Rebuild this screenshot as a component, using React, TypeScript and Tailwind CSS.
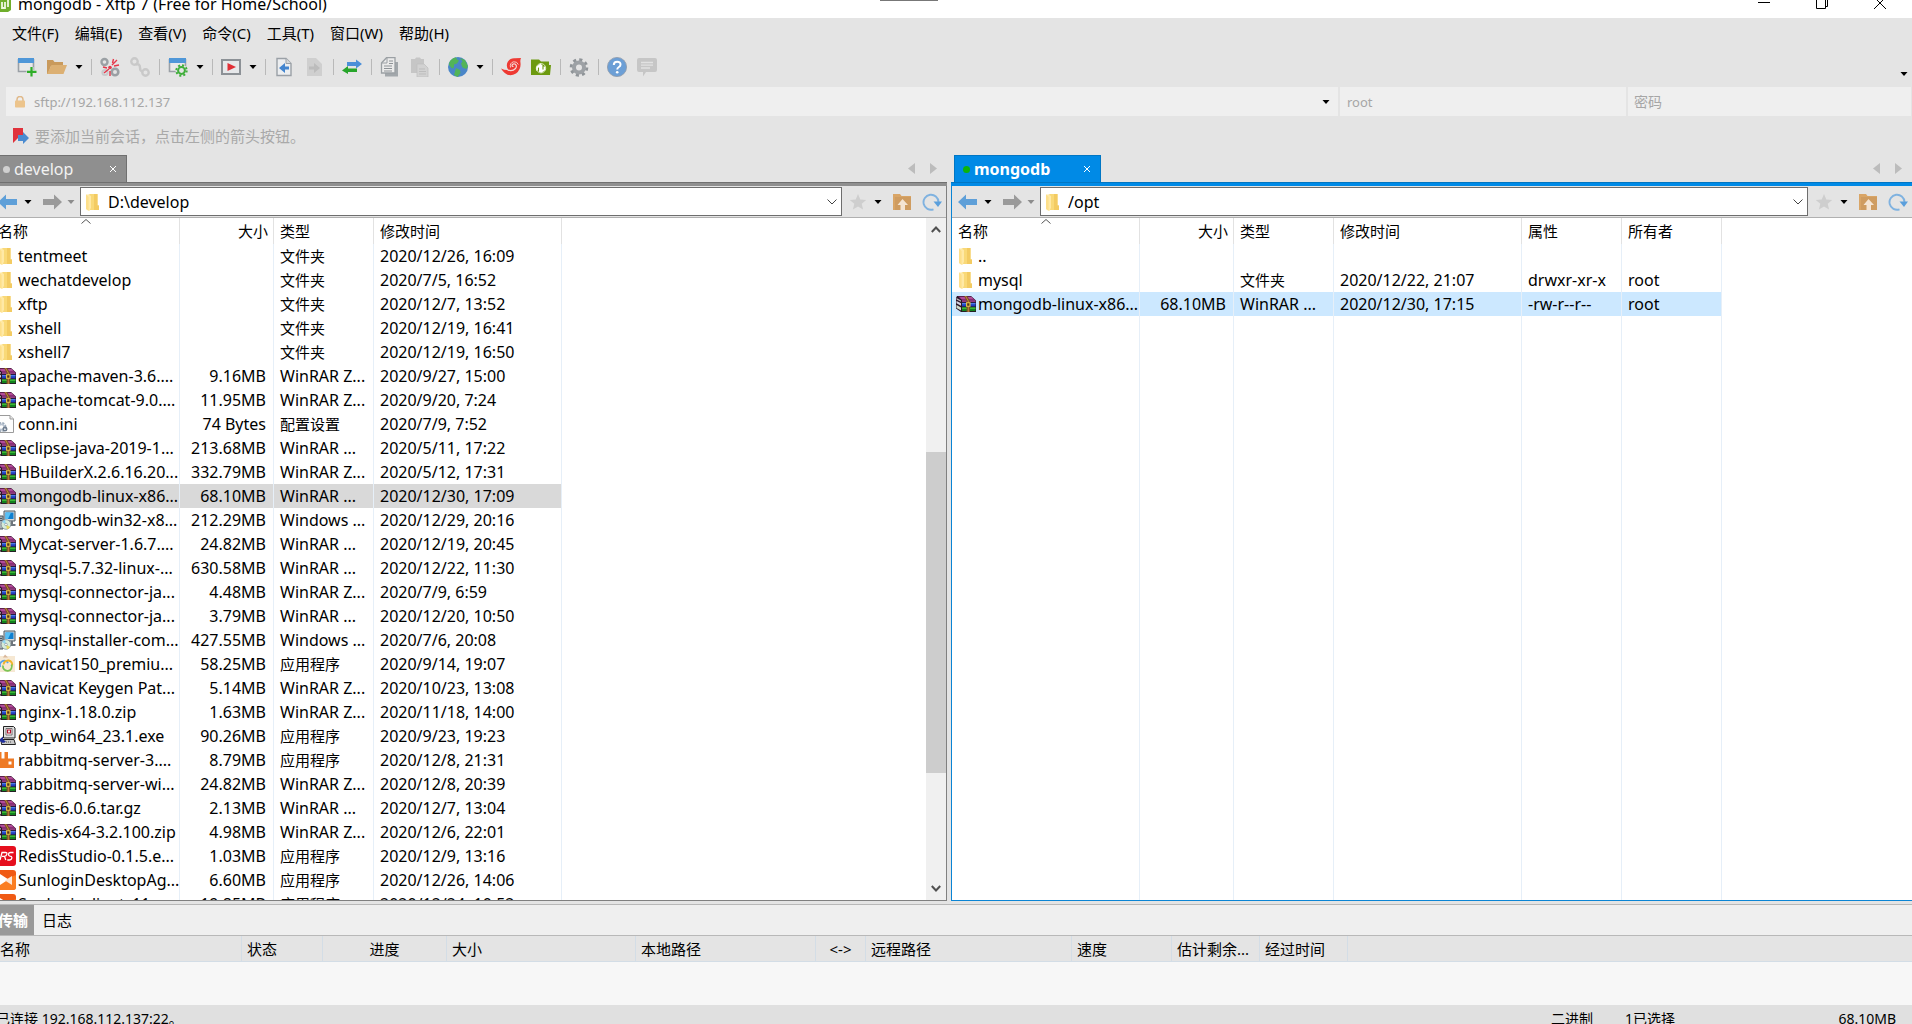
/**
 * App.tsx
 *
 * Two-pane SFTP client window: menu, toolbar, session bar, local / remote
 * file panes, transfer queue and status bar.
 */

import React from 'react';

// ─── Types ────────────────────────────────────────────────────────────────────

type FileKind = 'folder' | 'rar' | 'ini' | 'msi' | 'navicat' | 'otp' | 'rabbit' | 'redis' | 'sunlogin';

interface FileRow {
  kind: FileKind;
  name: string;
  size: string;
  type: string;
  modified: string;
  attrs?: string;
  owner?: string;
  selected?: boolean;
}

// ─── Data ─────────────────────────────────────────────────────────────────────

const LOCAL_FILES: FileRow[] = [
  { kind: 'folder', name: 'tentmeet', size: '', type: '文件夹', modified: '2020/12/26, 16:09' },
  { kind: 'folder', name: 'wechatdevelop', size: '', type: '文件夹', modified: '2020/7/5, 16:52' },
  { kind: 'folder', name: 'xftp', size: '', type: '文件夹', modified: '2020/12/7, 13:52' },
  { kind: 'folder', name: 'xshell', size: '', type: '文件夹', modified: '2020/12/19, 16:41' },
  { kind: 'folder', name: 'xshell7', size: '', type: '文件夹', modified: '2020/12/19, 16:50' },
  { kind: 'rar', name: 'apache-maven-3.6....', size: '9.16MB', type: 'WinRAR Z...', modified: '2020/9/27, 15:00' },
  { kind: 'rar', name: 'apache-tomcat-9.0....', size: '11.95MB', type: 'WinRAR Z...', modified: '2020/9/20, 7:24' },
  { kind: 'ini', name: 'conn.ini', size: '74 Bytes', type: '配置设置', modified: '2020/7/9, 7:52' },
  { kind: 'rar', name: 'eclipse-java-2019-1...', size: '213.68MB', type: 'WinRAR ...', modified: '2020/5/11, 17:22' },
  { kind: 'rar', name: 'HBuilderX.2.6.16.20...', size: '332.79MB', type: 'WinRAR Z...', modified: '2020/5/12, 17:31' },
  { kind: 'rar', name: 'mongodb-linux-x86...', size: '68.10MB', type: 'WinRAR ...', modified: '2020/12/30, 17:09', selected: true },
  { kind: 'msi', name: 'mongodb-win32-x8...', size: '212.29MB', type: 'Windows ...', modified: '2020/12/29, 20:16' },
  { kind: 'rar', name: 'Mycat-server-1.6.7....', size: '24.82MB', type: 'WinRAR ...', modified: '2020/12/19, 20:45' },
  { kind: 'rar', name: 'mysql-5.7.32-linux-...', size: '630.58MB', type: 'WinRAR ...', modified: '2020/12/22, 11:30' },
  { kind: 'rar', name: 'mysql-connector-ja...', size: '4.48MB', type: 'WinRAR Z...', modified: '2020/7/9, 6:59' },
  { kind: 'rar', name: 'mysql-connector-ja...', size: '3.79MB', type: 'WinRAR ...', modified: '2020/12/20, 10:50' },
  { kind: 'msi', name: 'mysql-installer-com...', size: '427.55MB', type: 'Windows ...', modified: '2020/7/6, 20:08' },
  { kind: 'navicat', name: 'navicat150_premiu...', size: '58.25MB', type: '应用程序', modified: '2020/9/14, 19:07' },
  { kind: 'rar', name: 'Navicat Keygen Pat...', size: '5.14MB', type: 'WinRAR Z...', modified: '2020/10/23, 13:08' },
  { kind: 'rar', name: 'nginx-1.18.0.zip', size: '1.63MB', type: 'WinRAR Z...', modified: '2020/11/18, 14:00' },
  { kind: 'otp', name: 'otp_win64_23.1.exe', size: '90.26MB', type: '应用程序', modified: '2020/9/23, 19:23' },
  { kind: 'rabbit', name: 'rabbitmq-server-3....', size: '8.79MB', type: '应用程序', modified: '2020/12/8, 21:31' },
  { kind: 'rar', name: 'rabbitmq-server-wi...', size: '24.82MB', type: 'WinRAR Z...', modified: '2020/12/8, 20:39' },
  { kind: 'rar', name: 'redis-6.0.6.tar.gz', size: '2.13MB', type: 'WinRAR ...', modified: '2020/12/7, 13:04' },
  { kind: 'rar', name: 'Redis-x64-3.2.100.zip', size: '4.98MB', type: 'WinRAR Z...', modified: '2020/12/6, 22:01' },
  { kind: 'redis', name: 'RedisStudio-0.1.5.e...', size: '1.03MB', type: '应用程序', modified: '2020/12/9, 13:16' },
  { kind: 'sunlogin', name: 'SunloginDesktopAg...', size: '6.60MB', type: '应用程序', modified: '2020/12/26, 14:06' },
  { kind: 'sunlogin', name: 'Sunloginclient_11....', size: '19.85MB', type: '应用程序', modified: '2020/12/24, 10:52' },
];

const REMOTE_FILES: FileRow[] = [
  { kind: 'folder', name: '..', size: '', type: '', modified: '', attrs: '', owner: '' },
  { kind: 'folder', name: 'mysql', size: '', type: '文件夹', modified: '2020/12/22, 21:07', attrs: 'drwxr-xr-x', owner: 'root' },
  { kind: 'rar', name: 'mongodb-linux-x86...', size: '68.10MB', type: 'WinRAR ...', modified: '2020/12/30, 17:15', attrs: '-rw-r--r--', owner: 'root', selected: true },
];

const MENU = ['文件(F)', '编辑(E)', '查看(V)', '命令(C)', '工具(T)', '窗口(W)', '帮助(H)'];

const QUEUE_COLUMNS = [
  { label: '名称', cell: 'w-[242px] pl-0 text-left' },
  { label: '状态', cell: 'w-[81px] pl-[5px] text-left' },
  { label: '进度', cell: 'w-[124px] pl-0 text-center' },
  { label: '大小', cell: 'w-[189px] pl-[5px] text-left' },
  { label: '本地路径', cell: 'w-[180px] pl-[5px] text-left' },
  { label: '<->', cell: 'w-[50px] pl-0 text-center' },
  { label: '远程路径', cell: 'w-[206px] pl-[5px] text-left' },
  { label: '速度', cell: 'w-[100px] pl-[5px] text-left' },
  { label: '估计剩余...', cell: 'w-[88px] pl-[5px] text-left' },
  { label: '经过时间', cell: 'w-[88px] pl-[5px] text-left' },
];

// ─── File icons ───────────────────────────────────────────────────────────────

const FolderIcon: React.FC = () => (
  <svg viewBox="0 0 20 20" className="w-5 h-5 shrink-0">
    <path d="M7 2h7.500v11.500H16V18H5V3z" fill="#f9d978" />
    <path d="M11 2h3.500v11.500H16V18h-5z" fill="#f3cb62" />
    <path d="M3 2.500h2.500L8 4v11.500L6.500 19 3 17z" fill="#ffe9a6" />
    <path d="M3 2.500 5.600 5v14L3 17z" fill="#fddf8a" />
  </svg>
);

const RarIcon: React.FC = () => (
  <svg viewBox="0 0 20 20" className="w-5 h-5 shrink-0">
    <path d="M1 2h14l5 4.500V18H5l-5-3.500V4z" fill="#2a1626" />
    {/* purple volume */}
    <path d="M2 2.500h13l4 3.500H6z" fill="#8d2a78" />
    <path d="M4 3.500h12l1 1H5z" fill="#d56fb8" />
    <path d="M6 6.300h13.500v1.500H6z" fill="#b0459a" />
    <path d="M0.500 4 5 6.500v1.300L0.500 5.500z" fill="#c9b7c2" />
    {/* blue volume */}
    <path d="M6 8.800h13.500v3.600H6z" fill="#1c3fc0" />
    <path d="M6 9.200h13.500v1H6z" fill="#5d8cf0" />
    <path d="M0.500 7 5 9.300v2.500L0.500 9.300z" fill="#d5d2e0" />
    {/* green volume */}
    <path d="M6 13.300h13.500v3.800H6z" fill="#12821f" />
    <path d="M6 13.600h13.500v1.100H6z" fill="#4fd040" />
    <path d="M0.500 11 5 13.600v3L0.500 14z" fill="#d3dccb" />
    {/* belt */}
    <path d="M8 2h3l3 4.500V18h-3.400V7z" fill="#7a4f28" />
    <path d="M9.500 2 12.300 7v11" stroke="#c98d3c" strokeWidth="0.900" fill="none" />
    <path d="M10.600 8.700h3.400v3.600h-3.400z" fill="#5a3415" stroke="#e8c64a" strokeWidth="1.100" />
  </svg>
);

const IniIcon: React.FC = () => (
  <svg viewBox="0 0 20 20" className="w-5 h-5 shrink-0">
    <path d="M3.500 1.500h10.500l3.500 3.500v13.500h-14z" fill="#fdfdfd" stroke="#9b9b9b" />
    <path d="M14 1.500v3.500h3.500" fill="#e6e6e6" stroke="#9b9b9b" />
    <circle cx="5.500" cy="13" r="4" fill="none" stroke="#9aa8b8" strokeWidth="2" strokeDasharray="2 1.200" />
    <circle cx="5.500" cy="13" r="2.600" fill="none" stroke="#b8c3d0" strokeWidth="1.600" />
    <circle cx="9" cy="15" r="1.800" fill="none" stroke="#6f7d8e" strokeWidth="1.400" />
  </svg>
);

const MsiIcon: React.FC = () => (
  <svg viewBox="0 0 20 20" className="w-5 h-5 shrink-0">
    <path d="M8 1h11v10H8z" fill="#d4d8dc" stroke="#4b565f" />
    <path d="M9.500 2.500h8v6.500h-8z" fill="#0e7fd0" />
    <path d="M9.500 2.500h5.500l-3 6.500h-2.500z" fill="#56c0f5" />
    <path d="M15 11h2v3h2.500v2H14z" fill="#6d757c" />
    <path d="M2 6h5v13H2z" fill="#aab1b7" stroke="#4b565f" />
    <path d="M3 8.500h3M3 10.500h3" stroke="#4b565f" />
    <circle cx="10" cy="14.500" r="4.800" fill="#d6ecd8" stroke="#7b868f" strokeWidth="0.700" />
    <path d="M10 14.500 6 12a4.800 4.800 0 0 1 3-2.200z" fill="#8fd3f0" />
    <path d="M10 14.500l4 2.500a4.800 4.800 0 0 1-3 2.200z" fill="#e6d75a" />
    <circle cx="10" cy="14.500" r="1.300" fill="#fff" stroke="#7b868f" strokeWidth="0.600" />
  </svg>
);

const NavicatIcon: React.FC = () => (
  <svg viewBox="0 0 20 20" className="w-5 h-5 shrink-0">
    <rect x="1" y="2" width="18" height="16" fill="#f6e8d3" />
    <path d="M9 0.500 12 3.500 7 3.500z" fill="#d9b79b" />
    <path d="M4.500 13a4 4 0 1 1 7.500-4" fill="none" stroke="#5aa3e8" strokeWidth="1.800" />
    <path d="M7.500 10.500a4.500 4.500 0 0 1 8.500-1.500q.8 1.500-.5 2.500" fill="none" stroke="#f0b429" strokeWidth="1.800" />
    <path d="M15.500 10.500a4.500 4.500 0 1 1-8.500 1" fill="none" stroke="#7cc455" strokeWidth="1.800" />
  </svg>
);

const OtpIcon: React.FC = () => (
  <svg viewBox="0 0 20 20" className="w-5 h-5 shrink-0">
    <path d="M7.500 0.500h10l1.500 1.500v10h-11.500z" fill="#e0e0e0" stroke="#222" />
    <path d="M10 2.500h6v6.500h-6z" fill="#fff" stroke="#555" strokeWidth="0.800" />
    <path d="M11.500 4h3v3h-3z" fill="none" stroke="#b0122c" strokeWidth="1.200" />
    <path d="M5 13.500h13l1.500 5h-14z" fill="#c8c8c8" stroke="#222" />
    <path d="M8 16h8" stroke="#555" strokeDasharray="1 1" />
    <path d="M1.500 15 7 10.500v3l3 2-3 1.500-2.500-1.500z" fill="#1f2f9c" />
  </svg>
);

const RabbitIcon: React.FC = () => (
  <svg viewBox="0 0 20 20" className="w-5 h-5 shrink-0">
    <path d="M2 2h3.500v6.500H8.500V2H12v6.500h6V18H2z" fill="#ee7a25" />
    <rect x="12.500" y="11.500" width="3" height="3" fill="#fff" />
  </svg>
);

const RedisStudioIcon: React.FC = () => (
  <svg viewBox="0 0 20 20" className="w-5 h-5 shrink-0">
    <rect x="0" y="0" width="20" height="20" rx="3" fill="#e60f1e" />
    <path d="M4 14 6 6.500h3.500q1.800 0 1.300 1.800T8.500 10.300H6M8.500 10.300l1.300 3.700" fill="none" stroke="#fff" strokeWidth="1.300" />
    <path d="M17.500 6.500h-3q-1.800 0-2 1.700t1.300 1.900q2.400 0 2 2T13.500 14h-2.200" fill="none" stroke="#fff" strokeWidth="1.300" />
  </svg>
);

const SunloginIcon: React.FC = () => (
  <svg viewBox="0 0 20 20" className="w-5 h-5 shrink-0">
    <rect x="0" y="0" width="20" height="20" rx="3" fill="#f05a14" />
    <path d="M0 13 20 5v12a3 3 0 0 1-3 3H3a3 3 0 0 1-3-3z" fill="#fb7d22" />
    <path d="M4 4 12.500 9.500 4 15z" fill="#fff" />
    <path d="M16 6v9L9 10.500z" fill="#fde6d6" />
  </svg>
);

const FILE_ICONS: Record<FileKind, React.FC> = {
  folder: FolderIcon,
  rar: RarIcon,
  ini: IniIcon,
  msi: MsiIcon,
  navicat: NavicatIcon,
  otp: OtpIcon,
  rabbit: RabbitIcon,
  redis: RedisStudioIcon,
  sunlogin: SunloginIcon,
};

// ─── Toolbar pieces ───────────────────────────────────────────────────────────

const Caret: React.FC<{ muted?: boolean }> = ({ muted }) => (
  <svg viewBox="0 0 8 4" className={muted ? 'w-2 h-1 shrink-0 text-[#8c8c8c]' : 'w-2 h-1 shrink-0 text-black'}>
    <path d="M0.500 0h7L4 4z" fill="currentColor" />
  </svg>
);

const ToolButton: React.FC<{ label: string; caret?: boolean; children: React.ReactNode }> = ({
  label, caret, children,
}) => (
  <button type="button" aria-label={label} className="flex items-center h-7 shrink-0">
    <span className="w-[30px] flex justify-center">
      <svg viewBox="0 0 20 20" className="w-5 h-5">{children}</svg>
    </span>
    {caret && <span className="w-[15px] flex justify-start pl-[3px]"><Caret /></span>}
  </button>
);

const Separator: React.FC = () => (
  <span className="w-2 flex justify-center shrink-0"><span className="w-px h-4 bg-[#b9b9b9]" /></span>
);

const Toolbar: React.FC = () => (
  <div className="flex items-center h-[38px] pl-3 pr-1">
    <ToolButton label="新建">
      <path d="M1.500 2v12.500h15V2" fill="#e9e9e9" stroke="#9aa0a6" strokeWidth="1.600" />
      <path d="M1 1h16v5H1z" fill="#4f97d8" />
      <path d="M14.500 10v10M9.500 15h10" stroke="#e4e4e4" strokeWidth="4" />
      <path d="M14.500 10v9.500M10 14.800h9.500" stroke="#2fae28" strokeWidth="2.200" />
    </ToolButton>
    <ToolButton label="打开" caret>
      <path d="M0 3h6l1.500 2H16v4H4L1 17H0z" fill="#c99a5c" />
      <path d="M4.500 8H20l-3.500 9H0z" fill="#dcb073" />
    </ToolButton>
    <Separator />
    <ToolButton label="断开">
      <circle cx="4.500" cy="5" r="3" fill="none" stroke="#9ba0a4" strokeWidth="2.400" />
      <circle cx="15" cy="15" r="3.300" fill="none" stroke="#9ba0a4" strokeWidth="2.600" />
      <circle cx="5" cy="15.500" r="2.600" fill="none" stroke="#c8cacc" strokeWidth="2" />
      <path d="M12 8l5-5M13.500 2l-1 4M19 8l-5 1M3 10l4 1M9 12l-5 4M10 14v5" stroke="#e5384a" strokeWidth="1.400" />
      <circle cx="10" cy="10.500" r="1.800" fill="#e5384a" />
    </ToolButton>
    <ToolButton label="重新连接">
      <circle cx="4.500" cy="4.500" r="3.200" fill="none" stroke="#c9c9c9" strokeWidth="2.400" />
      <circle cx="15.500" cy="15.500" r="3.200" fill="none" stroke="#c9c9c9" strokeWidth="2.400" />
      <path d="M6 7.500q4-1 4 3t3 4" fill="none" stroke="#c9c9c9" strokeWidth="2.400" />
    </ToolButton>
    <Separator />
    <ToolButton label="属性" caret>
      <path d="M1.500 2v12.500h16V2" fill="#e9e9e9" stroke="#9aa0a6" strokeWidth="1.600" />
      <path d="M1 1h17v5H1z" fill="#4f97d8" />
      <circle cx="13.500" cy="13.500" r="6" fill="#e4e4e4" />
      <circle cx="13.500" cy="13.500" r="5.200" fill="none" stroke="#3fae3a" strokeWidth="2" strokeDasharray="2.040 2.040" />
      <circle cx="13.500" cy="13.500" r="3.400" fill="none" stroke="#3fae3a" strokeWidth="2" />
    </ToolButton>
    <Separator />
    <ToolButton label="运行" caret>
      <rect x="1" y="3" width="18" height="14" fill="#e6e8ea" stroke="#8c9196" strokeWidth="2" />
      <path d="M6.500 6l8.500 4-8.500 4z" fill="#e02f36" />
    </ToolButton>
    <Separator />
    <ToolButton label="向左传输">
      <path d="M3 1.500h9l5 5v12H3z" fill="#eceef0" stroke="#9aa0a6" strokeWidth="1.400" />
      <path d="M12 1.500v5h5" fill="#d5d8da" stroke="#9aa0a6" />
      <path d="M5 11l6-5v3.500h4v3h-4V16z" fill="#4385cf" />
    </ToolButton>
    <ToolButton label="向右传输">
      <path d="M3 1h9l6 6v12H3z" fill="#cfcfcf" />
      <path d="M16 11l-6-5v3.500H5v3h5V16z" fill="#bcbcbc" />
    </ToolButton>
    <Separator />
    <ToolButton label="同步">
      <path d="M5 5h9V2.500l6 4.500-6 4.500V9H5z" fill="#4b8fd8" />
      <path d="M15 11.500H6V9l-6 4.500L6 17v-2h9z" fill="#27a52a" />
    </ToolButton>
    <Separator />
    <ToolButton label="复制">
      <path d="M5 5h13v14.500H5z" fill="#a2a7ab" />
      <path d="M1.500 6 6.500 0.700H15V16H1.500z" fill="#ebebeb" stroke="#9ba0a4" strokeWidth="1.300" />
      <path d="M7 1v5H2" fill="none" stroke="#9ba0a4" />
      <path d="M4 9h8M4 11.500h8M4 14h8M9 4h4M9 6.500h4" stroke="#8e9397" />
    </ToolButton>
    <ToolButton label="粘贴">
      <path d="M1 2h4l1-1.500h4L11 2h3v14H1z" fill="#c6c6c6" />
      <path d="M7 7h7l4 4v9H7z" fill="#d2d2d2" stroke="#c0c0c0" strokeWidth="0.800" />
      <path d="M9 12h6M9 14.500h7M9 17h7" stroke="#bdbdbd" />
    </ToolButton>
    <Separator />
    <ToolButton label="语言" caret>
      <circle cx="10" cy="10" r="10" fill="#4a86c8" />
      <path d="M2 4a10 10 0 0 1 6-3.800l1 2.300 2 1-2 3-3 1v3l-2 1-3-3.500A9 9 0 0 1 2 4z" fill="#52b458" />
      <path d="M12 1l5 2 3 6-1.500 3-4-1.500L13 6.500l1.500-2z" fill="#52b458" />
      <path d="M8 11l4 2 .5 3L9.500 20 6 18z" fill="#52b458" />
    </ToolButton>
    <Separator />
    <ToolButton label="Xshell">
      <path d="M0 11.500q4 2 7.500 1.500Q4.500 9 6.800 4.800 9.500.8 14 1.300l6-.3q-1 2-.5 5 .7 6.500-4.500 10.500-9 5-15-5z" fill="#ee3a33" />
      <path d="M6.500 13q5 1.800 8-1.500 2-3-.5-4.500-2.300-.8-3 1.200 0 1.500 1.500 1.300" fill="none" stroke="#f4d9d7" strokeWidth="1.200" />
      <path d="M9.500 10.500Q8.500 6 12.500 4.800q3.500-.5 4.800 2.700" fill="none" stroke="#f4d9d7" strokeWidth="0.900" />
    </ToolButton>
    <ToolButton label="Xftp">
      <path d="M0 2.500h8l2 2h8V8h2l-1 10H0z" fill="#6d9a10" />
      <path d="M9 15V8L6 10.500v3M10.500 7.500v7l3-2v-3" fill="none" stroke="#fff" strokeWidth="1.900" />
      <circle cx="10" cy="11.200" r="4.700" fill="none" stroke="#e9f2d4" strokeWidth="0.800" />
    </ToolButton>
    <Separator />
    <ToolButton label="选项">
      <circle cx="10" cy="10.500" r="7.800" fill="none" stroke="#8f9498" strokeWidth="3" strokeDasharray="3.060 3.066" />
      <circle cx="10" cy="10.500" r="5" fill="none" stroke="#9da1a5" strokeWidth="4" />
    </ToolButton>
    <Separator />
    <ToolButton label="帮助">
      <circle cx="10" cy="10" r="9.600" fill="#6c9fd6" stroke="#8e9bab" strokeWidth="0.800" />
      <path d="M6.800 8q0-3.300 3.400-3.300T13.500 7.500q0 1.600-1.600 2.500T10.200 12.500" fill="none" stroke="#fff" strokeWidth="2" />
      <circle cx="10.200" cy="15.200" r="1.300" fill="#fff" />
    </ToolButton>
    <ToolButton label="反馈">
      <path d="M2 1h16a2 2 0 0 1 2 2v10a2 2 0 0 1-2 2H9l-3 4.500V15H2a2 2 0 0 1-2-2V3a2 2 0 0 1 2-2z" fill="#c6c6c6" />
      <path d="M4 5.500h12M4 8.200h12M4 11h9" stroke="#e2e2e2" strokeWidth="1.300" />
    </ToolButton>
    <button type="button" aria-label="工具栏选项" className="ml-auto self-end pb-[10px]"><Caret /></button>
  </div>
);

// ─── Session bar ──────────────────────────────────────────────────────────────

const SessionBar: React.FC = () => (
  <div className="grid grid-cols-[1332fr_286fr_283fr] gap-[2px] pl-[6px] pr-px h-[29px] shrink-0 text-[#a6a6a6]">
    <div className="min-w-0 flex items-center bg-[#efefef] pl-[9px] pr-2">
      <svg viewBox="0 0 10 12" className="w-[10px] h-3 shrink-0">
        <path d="M2 5V3.500a3 3 0 0 1 6 0V5" fill="none" stroke="#e0b98a" strokeWidth="1.500" />
        <rect x="0" y="4.500" width="10" height="7" rx="0.800" fill="#ecc48c" />
      </svg>
      <input
        aria-label="主机地址"
        defaultValue="sftp://192.168.112.137"
        className="flex-1 min-w-0 h-6 pl-[9px] bg-transparent outline-none text-[13px]"
      />
      <button type="button" aria-label="历史地址"><Caret /></button>
    </div>
    <input aria-label="用户名" defaultValue="root" className="min-w-0 bg-[#efefef] px-[7px] outline-none text-[13px]" />
    <input
      type="password"
      aria-label="密码"
      placeholder="密码"
      className="min-w-0 bg-[#efefef] px-[6px] outline-none text-[14px] placeholder:text-[#a6a6a6]"
    />
  </div>
);

// ─── File pane ────────────────────────────────────────────────────────────────

const SortMark: React.FC = () => (
  <svg viewBox="0 0 10 5" className="absolute top-px left-1/2 -translate-x-1/2 w-[10px] h-[5px]">
    <path d="M0.500 4.500 5 0.500l4.500 4" fill="none" stroke="#555" />
  </svg>
);

const FileTable: React.FC<{ rows: FileRow[]; remote?: boolean }> = ({ rows, remote }) => {
  const head = 'h-[26px] p-0 border-r border-[#e2e2e2] font-normal';
  const cell = 'h-6 p-0 border-r border-[#e6eff8] overflow-hidden';
  const names = remote
    ? ['名称', '大小', '类型', '修改时间', '属性', '所有者']
    : ['名称', '大小', '类型', '修改时间'];

  return (
    <table className={`table-fixed border-separate border-spacing-0 h-full text-[16px] leading-[22px] whitespace-nowrap ${remote ? 'w-[770px]' : 'w-[570px]'}`}>
      <colgroup>
        <col className="w-[188px]" />
        <col className="w-[94px]" />
        <col className="w-[100px]" />
        <col className="w-[188px]" />
        {remote && <col className="w-[100px]" />}
        {remote && <col className="w-[100px]" />}
      </colgroup>
      <thead className="text-[15px]">
        <tr>
          {names.map((name, i) => (
            <th
              key={name}
              scope="col"
              className={`${head} ${i === 0 ? 'relative text-left pl-[6px]' : i === 1 ? 'text-right pr-[5px]' : 'text-left pl-[6px]'}`}
            >
              {name}
              {i === 0 && <SortMark />}
            </th>
          ))}
        </tr>
      </thead>
      <tbody>
        {rows.map((row, i) => {
          const Icon = FILE_ICONS[row.kind];
          const fill = row.selected ? (remote ? 'bg-[#cce8ff]' : 'bg-[#d9d9d9]') : '';
          const typeSize = row.type.startsWith('Win') ? '' : 'text-[15px]';
          return (
            <tr key={i} className={fill}>
              <td className={cell}>
                <div className="flex items-center gap-[2px] pl-1 h-6">
                  <Icon />
                  <span>{row.name}</span>
                </div>
              </td>
              <td className={`${cell} text-right pr-[7px]`}>{row.size}</td>
              <td className={`${cell} pl-[6px] ${typeSize}`}>{row.type}</td>
              <td className={`${cell} pl-[6px]`}>{row.modified}</td>
              {remote && <td className={`${cell} pl-[6px]`}>{row.attrs}</td>}
              {remote && <td className={`${cell} pl-[6px]`}>{row.owner}</td>}
            </tr>
          );
        })}
        {/* keeps the column rules running to the bottom of the pane */}
        <tr aria-hidden="true">
          {names.map((name) => <td key={name} className="p-0 border-r border-[#e6eff8]" />)}
        </tr>
      </tbody>
    </table>
  );
};

const PathBar: React.FC<{ path: string }> = ({ path }) => (
  <div className="flex items-center h-8 shrink-0 py-px pl-[6px] pr-1 bg-[#e4e4e4] border-b border-[#b0b0b0]">
    <button type="button" aria-label="后退" className="flex items-center">
      <svg viewBox="0 0 20 16" className="w-5 h-4">
        <path d="M0 8 8 0.500V5h11v6H8v4.500z" fill="#5e9fd8" />
      </svg>
      <span className="w-5 flex justify-center"><Caret /></span>
    </button>
    <button type="button" aria-label="前进" className="flex items-center pl-1">
      <svg viewBox="0 0 20 16" className="w-5 h-4">
        <path d="M20 8 12 0.500V5H1v6h11v4.500z" fill="#9a9a9a" />
      </svg>
      <span className="w-[18px] flex justify-center"><Caret muted /></span>
    </button>
    <div className="flex-1 min-w-0 flex items-center h-[29px] pl-[2px] pr-1 border border-[#6e6e6e] bg-white">
      <FolderIcon />
      <input
        aria-label="路径"
        defaultValue={path}
        className="flex-1 min-w-0 pl-[5px] h-6 bg-transparent outline-none text-[16px]"
      />
      <button type="button" aria-label="路径列表">
        <svg viewBox="0 0 10 6" className="w-[10px] h-[6px]">
          <path d="M0.500 0.500 5 5l4.500-4.500" fill="none" stroke="#444" />
        </svg>
      </button>
    </div>
    <button type="button" aria-label="收藏" className="flex items-center pl-[7px]">
      <svg viewBox="0 0 18 18" className="w-[18px] h-[18px]">
        <path d="M9 1l2.300 5.500 5.900.5-4.500 3.800 1.400 5.800L9 13.500l-5.100 3.100 1.400-5.800L.8 7l5.900-.5z" fill="#cecece" />
      </svg>
      <span className="w-[22px] flex justify-center"><Caret /></span>
    </button>
    <button type="button" aria-label="上级目录" className="pl-1">
      <svg viewBox="0 0 18 18" className="w-[18px] h-[18px]">
        <path d="M0 1h7l1.500 2H18v14H0z" fill="#d9a566" />
        <path d="M2 4h16v13H2z" fill="#cf9c60" />
        <path d="M9.500 6 15 12h-3v5H7.500v-5h-3z" fill="#f4e4d2" />
      </svg>
    </button>
    <button type="button" aria-label="刷新" className="pl-[11px]">
      <svg viewBox="0 0 20 18" className="w-5 h-[18px]">
        <path d="M11.500 16.300A7.500 7.500 0 1 1 16.500 9" fill="none" stroke="#7fb2e0" strokeWidth="1.900" />
        <path d="M11.500 8.500H20L16 14z" fill="#5a9fdc" />
      </svg>
    </button>
  </div>
);

const TabArrows: React.FC = () => (
  <div className="ml-auto flex gap-[15px] items-center pr-[10px]">
    <button type="button" aria-label="上一个标签">
      <svg viewBox="0 0 7 11" className="w-[7px] h-[11px]"><path d="M7 0v11L0 5.500z" fill="#bcbcbc" /></svg>
    </button>
    <button type="button" aria-label="下一个标签">
      <svg viewBox="0 0 7 11" className="w-[7px] h-[11px]"><path d="M0 0v11l7-5.500z" fill="#bcbcbc" /></svg>
    </button>
  </div>
);

const VerticalScroll: React.FC = () => (
  <div className="w-5 shrink-0 flex flex-col items-center bg-[#f0f0f0] py-2">
    <svg viewBox="0 0 10 7" className="w-[10px] h-[7px] shrink-0">
      <path d="M0.800 6 5 1.500 9.200 6" fill="none" stroke="#505050" strokeWidth="2" />
    </svg>
    <div className="w-full flex-1 flex flex-col py-1">
      <div className="flex-[214]" />
      <div className="flex-[320] bg-[#cdcdcd]" />
      <div className="flex-[108]" />
    </div>
    <svg viewBox="0 0 10 7" className="w-[10px] h-[7px] shrink-0">
      <path d="M0.800 1 5 5.500 9.200 1" fill="none" stroke="#505050" strokeWidth="2" />
    </svg>
  </div>
);

interface PaneProps {
  title: string;
  path: string;
  rows: FileRow[];
  remote?: boolean;
}

const FilePane: React.FC<PaneProps> = ({ title, path, rows, remote }) => (
  <div className="flex-1 min-w-0 flex flex-col">
    <div className="flex h-[27px] shrink-0 pl-[3px]">
      <div
        className={`flex items-center border border-b-0 text-[16px] pl-2 pr-[9px] ${
          remote
            ? 'w-[147px] bg-[#008ae6] border-[#0076c4] text-white font-bold'
            : 'w-[133px] bg-[#8f8f8f] border-[#707070] text-[#f2f2f2]'
        }`}
      >
        <span className={`w-[7px] h-[7px] shrink-0 rounded-full mr-1 ${remote ? 'bg-[#0cb40c]' : 'bg-[#d0d0d0]'}`} />
        <span>{title}</span>
        <button type="button" aria-label="关闭标签" className="ml-auto">
          <svg viewBox="0 0 8 8" className="w-2 h-2">
            <path d="M1 1l6 6M7 1 1 7" stroke="#fff" strokeWidth="1" />
          </svg>
        </button>
      </div>
      <TabArrows />
    </div>
    <div className={`h-1 shrink-0 border-t ${remote ? 'bg-[#008ae6] border-[#0076c4]' : 'bg-[#8f8f8f] border-[#707070]'}`} />
    <div
      className={`flex-1 min-h-0 flex flex-col border-b ${
        remote ? 'border-l border-[#0a84d4]' : 'border-x border-[#808080]'
      }`}
    >
      <PathBar path={path} />
      <div className="flex-1 min-h-0 flex bg-white">
        <div className="flex-1 min-w-0 overflow-hidden"><FileTable rows={rows} remote={remote} /></div>
        {!remote && <VerticalScroll />}
      </div>
    </div>
  </div>
);

// ─── App ──────────────────────────────────────────────────────────────────────

const App: React.FC = () => (
  <div className="h-screen flex flex-col overflow-hidden bg-[#e4e4e4] text-black text-[15px] leading-[22px] font-['Noto_Sans','Noto_Sans_CJK_SC',sans-serif]">
    {/* Title bar */}
    <header className="relative h-[18px] shrink-0 flex items-start justify-between overflow-hidden bg-white">
      <div className="flex items-center h-6 -mt-2 gap-[6px]">
        <svg viewBox="0 0 12 16" className="w-3 h-4">
          <path d="M0 1h11v13l-3 2H0z" fill="#6fae2c" />
          <path d="M2 6v6h3V6M8 4v7" fill="none" stroke="#eef7e0" strokeWidth="1.800" />
        </svg>
        <h1 className="text-[16px] leading-6">mongodb - Xftp 7 (Free for Home/School)</h1>
      </div>
      <div className="absolute left-[46%] top-0 w-[58px] h-px bg-[#777]" />
      <div className="flex items-start pr-[26px] gap-[46px]">
        <button type="button" aria-label="最小化">
          <svg viewBox="0 0 12 10" className="w-3 h-[10px]"><path d="M0 2.500h12" stroke="#000" /></svg>
        </button>
        <button type="button" aria-label="还原">
          <svg viewBox="0 0 12 10" className="w-3 h-[10px]">
            <path d="M0.500 0v8.500h9V0M11.500 0v6.500h-2" fill="none" stroke="#000" />
          </svg>
        </button>
        <button type="button" aria-label="关闭">
          <svg viewBox="0 0 12 10" className="w-3 h-[10px]"><path d="M1-2l11 11M11-2 0 9" stroke="#000" /></svg>
        </button>
      </div>
    </header>

    {/* Menu */}
    <nav className="flex items-center gap-4 h-[30px] shrink-0 pl-3">
      {MENU.map((item) => <button key={item} type="button">{item}</button>)}
    </nav>

    <div className="shrink-0 pb-px"><Toolbar /></div>
    <SessionBar />

    {/* Hint */}
    <div className="flex items-center gap-[6px] h-[39px] shrink-0 pl-[13px] text-[#a9a9a9]">
      <svg viewBox="0 0 16 16" className="w-4 h-4">
        <path d="M0 0h10v13l-5-3-5 5z" fill="#e0323c" />
        <path d="M5 7h5V4l6 6-6 6v-3H5z" fill="#4a8bd0" />
      </svg>
      <p>要添加当前会话，点击左侧的箭头按钮。</p>
    </div>

    {/* Panes */}
    <main className="flex-1 min-h-0 grid grid-cols-[947fr_961fr] gap-1">
      <section className="min-w-0 min-h-0 flex overflow-hidden">
        <div className="flex-1 min-w-0 flex -ml-[9px]">
          <FilePane title="develop" path="D:\develop" rows={LOCAL_FILES} />
        </div>
      </section>
      <section className="min-w-0 min-h-0 flex overflow-hidden">
        <FilePane title="mongodb" path="/opt" rows={REMOTE_FILES} remote />
      </section>
    </main>

    {/* Transfer queue */}
    <section className="shrink-0 mt-[3px]">
      <div className="flex h-8 border-y border-[#b8b8b8] bg-[#efefef] overflow-hidden">
        <button type="button" className="w-[34px] flex justify-end items-center pr-[6px] bg-[#999999] text-white font-bold whitespace-nowrap">传输</button>
        <button type="button" className="px-2">日志</button>
      </div>
      <div className="h-[69px] bg-[#f7f7f7] overflow-hidden">
        <div className="bg-[#e4e4e4] border-b border-[#d3dde6]">
          <table className="table-fixed border-separate border-spacing-0 w-[1348px] whitespace-nowrap">
            <thead>
              <tr>
                {QUEUE_COLUMNS.map((col) => (
                  <th
                    key={col.label}
                    scope="col"
                    className={`h-[25px] py-0 pr-0 font-normal border-r border-[#d3dde6] ${col.cell}`}
                  >
                    {col.label}
                  </th>
                ))}
              </tr>
            </thead>
          </table>
        </div>
      </div>
    </section>

    {/* Status bar */}
    <footer className="h-[19px] shrink-0 overflow-hidden bg-[#e0e0e0]">
      <div className="flex items-center h-7 pr-4 -ml-1 text-[14px]">
        <span>已连接 192.168.112.137:22。</span>
        <span className="ml-auto w-[74px]">二进制</span>
        <span className="w-[140px]">1已选择</span>
        <span className="w-[131px] text-right">68.10MB</span>
      </div>
    </footer>
  </div>
);

export default App;
